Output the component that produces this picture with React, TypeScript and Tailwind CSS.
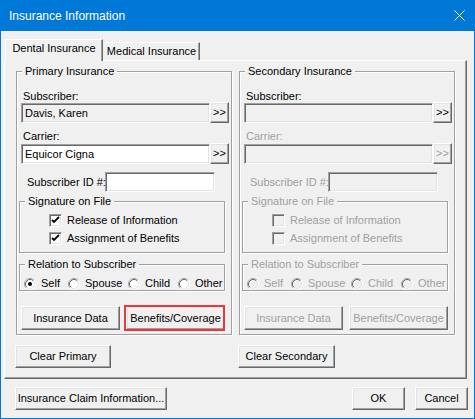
import React from "react";

const GRAY = "text-[#a0a0a0]";

function Btn({ children, className = "", disabled }: { children: React.ReactNode; className?: string; disabled?: boolean }) {
  return (
    <button
      className={`relative flex items-center justify-center border border-t-white border-l-white border-r-[#696969] border-b-[#696969] bg-[#f0f0f0] shadow-[inset_-1px_-1px_0_#a0a0a0,inset_1px_1px_0_#e3e3e3] leading-[13px] ${disabled ? GRAY : "text-black"} ${className}`}
    >
      {children}
    </button>
  );
}

function Field({ value, white, className = "" }: { value?: string; white?: boolean; className?: string }) {
  return (
    <div
      className={`flex items-center pl-[2px] border border-t-[#a0a0a0] border-l-[#a0a0a0] border-r-white border-b-white shadow-[inset_1px_1px_0_#696969,inset_-1px_-1px_0_#e3e3e3] leading-[13px] ${white ? "bg-white" : "bg-[#f0f0f0]"} ${className}`}
    >
      <span className="pl-[1px]">{value}</span>
    </div>
  );
}

function Group({ title, disabled, className = "", children }: { title: string; disabled?: boolean; className?: string; children?: React.ReactNode }) {
  return (
    <div className={`relative border border-[#a0a0a0] shadow-[inset_1px_1px_0_#fff,1px_1px_0_#fff] ${className}`}>
      <span className={`absolute -top-[7px] left-[5px] px-[3px] bg-[#f0f0f0] leading-[13px] ${disabled ? GRAY : ""}`}>{title}</span>
      {children}
    </div>
  );
}

function Check({ label, checked, disabled }: { label: string; checked?: boolean; disabled?: boolean }) {
  return (
    <div className="flex items-center h-[18px]">
      <div
        className={`w-[13px] h-[13px] border border-t-[#a0a0a0] border-l-[#a0a0a0] border-r-white border-b-white shadow-[inset_1px_1px_0_#696969,inset_-1px_-1px_0_#e3e3e3] ${disabled ? "bg-[#f0f0f0]" : "bg-white"}`}
      >
        {checked && (
          <svg width="11" height="11" viewBox="0 0 11 11">
            <path d="M2 5 L4 7 L9 2" stroke="#000" strokeWidth="1.8" fill="none" />
          </svg>
        )}
      </div>
      <span className={`ml-[5px] leading-[13px] ${disabled ? GRAY : ""}`}>{label}</span>
    </div>
  );
}

function Radio({ label, checked, disabled, className = "" }: { label: string; checked?: boolean; disabled?: boolean; className?: string }) {
  return (
    <div className={`flex items-center ${className}`}>
      <svg width="12" height="12" viewBox="0 0 12 12" className="shrink-0">
        <circle cx="6" cy="6" r="5" fill={disabled ? "#f0f0f0" : "#fff"} />
        <path d="M2.11 9.89 A5.5 5.5 0 0 1 9.89 2.11" stroke="#a0a0a0" fill="none" />
        <path d="M9.89 2.11 A5.5 5.5 0 0 1 2.11 9.89" stroke="#fff" fill="none" />
        <path d="M2.82 9.18 A4.5 4.5 0 0 1 9.18 2.82" stroke="#696969" fill="none" />
        <path d="M9.18 2.82 A4.5 4.5 0 0 1 2.82 9.18" stroke="#e3e3e3" fill="none" />
        {checked && <circle cx="6" cy="6" r="2" fill="#000" />}
      </svg>
      <span className={`ml-[5px] leading-[13px] ${disabled ? GRAY : ""}`}>{label}</span>
    </div>
  );
}

function Pane({ title, subscriber, carrier, primary }: { title: string; subscriber?: string; carrier?: string; primary?: boolean }) {
  const off = !primary;
  return (
    <Group title={title} className="w-[216px] h-[264px]">
      <div className="mt-[18px] pl-[6px] leading-[13px]">Subscriber:</div>
      <div className="flex items-end h-[21px] -mt-px ml-[4px]">
        <Field value={subscriber} className="w-[189px] h-[20px]" />
        <Btn className="w-[19px] h-[21px]">&gt;&gt;</Btn>
      </div>
      <div className={`mt-[7px] pl-[6px] leading-[13px] ${off ? GRAY : ""}`}>Carrier:</div>
      <div className="flex items-end h-[21px] ml-[4px]">
        <Field value={carrier} white={primary} className="w-[189px] h-[20px]" />
        <Btn className="w-[19px] h-[21px]" disabled={off}>&gt;&gt;</Btn>
      </div>
      <div className="flex items-center h-[20px] mt-[8px] pl-[10px]">
        <span className={`w-[78px] whitespace-nowrap leading-[13px] ${off ? GRAY : ""}`}>Subscriber ID #:</span>
        <Field white={primary} className="w-[110px] h-[20px]" />
      </div>
      <Group title="Signature on File" disabled={off} className="mt-[9px] ml-[2px] w-[206px] h-[52px]">
        <div className="pt-[9px] pl-[29px]">
          <Check label="Release of Information" checked={primary} disabled={off} />
          <Check label="Assignment of Benefits" checked={primary} disabled={off} />
        </div>
      </Group>
      <Group title="Relation to Subscriber" disabled={off} className="mt-[11px] ml-[2px] w-[206px] h-[27px]">
        <div className="flex items-center h-[13px] mt-[12px] pl-[4px]">
          <Radio label="Self" checked={primary} disabled={off} className="w-[44px]" />
          <Radio label="Spouse" disabled={off} className="w-[60px]" />
          <Radio label="Child" disabled={off} className="w-[50px]" />
          <Radio label="Other" disabled={off} />
        </div>
      </Group>
      <div className="flex mt-[15px] ml-[4px]">
        <Btn className="w-[99px] h-[24px]" disabled={off}>Insurance Data</Btn>
        <Btn className="ml-[6px] w-[99px] h-[24px]" disabled={off}>
          Benefits/Coverage
          {primary && <span className="absolute -left-[3px] -top-[2px] -right-[1px] -bottom-[2px] border-2 border-[#e8383d]" />}
        </Btn>
      </div>
    </Group>
  );
}

export default function App() {
  return (
    <div className="w-[475px] h-[419px] bg-[#0078d7] px-px pb-px flex flex-col text-[11px] text-black font-['Liberation_Sans',Arial,sans-serif]">
      <div className="h-[31px] shrink-0 flex items-center justify-between pl-[8px] pr-[9px] text-white text-[12px]">
        <span className="leading-[16px]">Insurance Information</span>
        <svg width="11" height="11" viewBox="0 0 11 11">
          <path d="M0.5 0.5 L10.5 10.5 M10.5 0.5 L0.5 10.5" stroke="#fff" strokeWidth="1" />
        </svg>
      </div>
      <div className="flex-1 bg-[#f0f0f0] pt-[8px] pl-[3px] pr-[7px] flex flex-col">
        <div className="flex items-end h-[21px]">
          <div className="relative z-10 -mb-px ml-px w-[98px] h-[22px] bg-[#f0f0f0] border border-b-0 border-t-white border-l-white border-r-[#696969] shadow-[inset_-1px_0_0_#a0a0a0] flex justify-center pt-[2px] leading-[13px]">
            Dental Insurance
          </div>
          <div className="w-[97px] h-[18px] border border-b-0 border-t-white border-l-[#f0f0f0] border-r-[#696969] shadow-[inset_-1px_0_0_#a0a0a0] flex justify-center pt-[2px] leading-[13px]">
            Medical Insurance
          </div>
        </div>
        <div className="w-[463px] h-[319px] border border-t-white border-l-white border-r-[#696969] border-b-[#696969] shadow-[inset_-1px_-1px_0_#a0a0a0] pt-[10px] px-[11px]">
          <div className="flex gap-[7px]">
            <Pane title="Primary Insurance" subscriber="Davis, Karen" carrier="Equicor Cigna" primary />
            <Pane title="Secondary Insurance" />
          </div>
          <div className="flex gap-[7px] mt-[10px]">
            <div className="w-[216px]">
              <Btn className="-ml-px w-[96px] h-[23px]">Clear Primary</Btn>
            </div>
            <div className="w-[216px]">
              <Btn className="-ml-px w-[97px] h-[23px]">Clear Secondary</Btn>
            </div>
          </div>
        </div>
        <div className="flex items-center mt-[8px] pl-[11px] -mr-px">
          <Btn className="w-[152px] h-[23px]">Insurance Claim Information...</Btn>
          <Btn className="ml-auto w-[53px] h-[23px]">OK</Btn>
          <Btn className="ml-[10px] w-[53px] h-[23px]">Cancel</Btn>
        </div>
      </div>
    </div>
  );
}
